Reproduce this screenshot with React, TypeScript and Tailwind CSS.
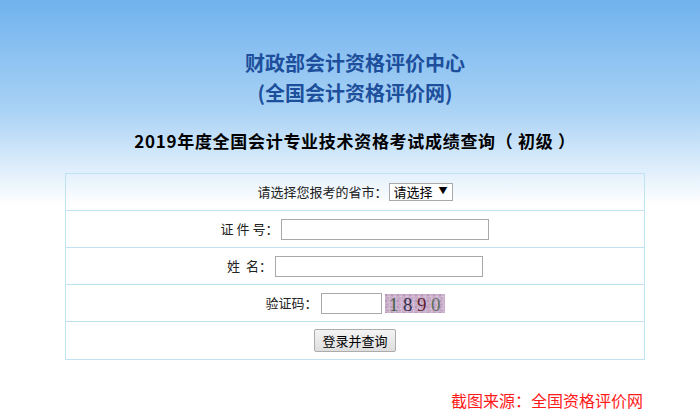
import { FC } from 'react';

const font = { fontFamily: '"Noto Sans CJK SC", "Noto Sans", sans-serif' };

const Row: FC<{ children: React.ReactNode; last?: boolean }> = ({ children, last }) => (
    <div
        className={`flex h-[37px] items-center justify-center border-[#bfe3f3] ${last ? '' : 'border-b'}`}
    >
        {children}
    </div>
);

const Captcha: FC = () => (
    <svg width="60" height="19" viewBox="0 0 60 19" className="ml-[3px]">
        <defs>
            <pattern id="noise" width="6" height="6" patternUnits="userSpaceOnUse">
                <rect width="6" height="6" fill="#cbb0cb" />
                <rect x="0" y="0" width="2" height="2" fill="#b89ab8" />
                <rect x="3" y="2" width="2" height="1" fill="#dcc6dc" />
                <rect x="1" y="4" width="3" height="1" fill="#bfa2c0" />
                <rect x="4" y="4" width="1" height="2" fill="#d8c0d8" />
            </pattern>
        </defs>
        <rect width="60" height="19" fill="url(#noise)" />
        <g fontFamily='"Liberation Serif", serif' fontSize="19">
            <text x="4" y="16.5" fill="#3f6048">1</text>
            <text x="18" y="16.5" fill="#34304f">8</text>
            <text x="32" y="16.5" fill="#5e2233">9</text>
            <text x="46" y="16.5" fill="#5f7062">0</text>
        </g>
    </svg>
);

export default function App() {
    return (
        <div
            className="h-[419px] w-[700px] overflow-hidden bg-[linear-gradient(to_bottom,#70b2ee_0px,#a9d2f5_110px,#ffffff_205px)]"
            style={font}
        >
            <div className="ml-[65px] w-[580px] pt-[48px] text-center">
                <div className="text-[20px] font-bold leading-[30px] text-[#1d4f9c]">
                    <div>财政部会计资格评价中心</div>
                    <div>(全国会计资格评价网)</div>
                </div>
                <div className="mt-[21px] text-[17px] font-bold leading-[24px] tracking-[0.7px] text-black">
                    2019年度全国会计专业技术资格考试成绩查询（ 初级 ）
                </div>

                <div className="mt-[20px] border border-[#bfe3f3] text-[13px] text-[#222]">
                    <Row>
                        <span>请选择您报考的省市：</span>
                        <div className="relative ml-[1px]">
                            <select className="h-[18px] w-[64px] appearance-none border border-[#a9a9a9] bg-white pl-[4px] text-[13px] leading-[16px] text-black outline-none">
                                <option>请选择</option>
                            </select>
                            <span className="pointer-events-none absolute right-[5px] top-[1px] text-[9px] leading-[16px] text-black">
                                ▼
                            </span>
                        </div>
                    </Row>
                    <Row>
                        <span className="mr-[3px]">证 件 号：</span>
                        <input className="h-[21px] w-[208px] border border-[#a9a9a9] bg-white outline-none" />
                    </Row>
                    <Row>
                        <span className="mr-[3px]">姓&nbsp;&nbsp;名：</span>
                        <input className="h-[21px] w-[208px] border border-[#a9a9a9] bg-white outline-none" />
                    </Row>
                    <Row>
                        <span className="mr-[3px]">验证码：</span>
                        <input className="h-[21px] w-[61px] border border-[#a9a9a9] bg-white outline-none" />
                        <Captcha />
                    </Row>
                    <Row last>
                        <button className="h-[23px] w-[82px] rounded-[2px] border border-[#acacac] bg-[linear-gradient(to_bottom,#f4f4f4,#dedede)] text-[13px] leading-[20px] text-black">
                            登录并查询
                        </button>
                    </Row>
                </div>

                <div className="mt-[28px] pr-[2px] text-right text-[16px] leading-[24px] text-[#ff1a1a]">
                    截图来源：全国资格评价网
                </div>
            </div>
        </div>
    );
}
